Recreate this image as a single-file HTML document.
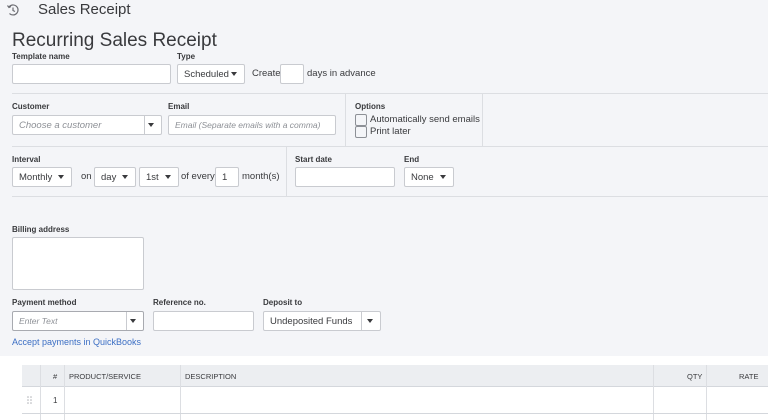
<!DOCTYPE html>
<html><head><meta charset="utf-8"><style>
*{box-sizing:border-box;margin:0;padding:0}
body{width:768px;height:420px;overflow:hidden;background:#f4f5f8;font-family:"Liberation Sans",sans-serif;color:#393a3d;position:relative}
.a{position:absolute}
.lbl{position:absolute;font-size:8px;font-weight:bold;color:#393a3d}
.in{position:absolute;background:#fff;border:1px solid #c9cbd0;border-radius:2px;font-size:9.5px;color:#393a3d;padding-left:6px;display:flex;align-items:center}
.ph{color:#8d9096;font-style:italic}
.car{position:absolute;right:7px;top:50%;margin-top:-2px;width:0;height:0;border-left:3px solid transparent;border-right:3px solid transparent;border-top:4px solid #393a3d}
.t{position:absolute;font-size:9.5px;color:#393a3d}
.hl{position:absolute;height:1px;background:#dcdee2}
.vl{position:absolute;width:1px;background:#dcdee2}
.cb{position:absolute;width:12px;height:12px;border:1px solid #8d9096;border-radius:2px;background:#f4f5f8}
</style></head><body>
<svg class="a" style="left:6px;top:3px" width="14" height="14" viewBox="0 0 14 14" fill="none" stroke="#6b6c72" stroke-width="1.2"><path d="M3 4 A5 5 0 1 1 3.5 10.5"/><path d="M1.5 2.5 L3 4.5 L5 3.5"/><path d="M7 4.5 V7.5 L9 8.5"/></svg>
<div class="a" style="left:38px;top:1px;font-size:15px;color:#393a3d">Sales Receipt</div>
<div class="a" style="left:12px;top:30px;font-size:19px;color:#393a3d">Recurring Sales Receipt</div>

<div class="lbl" style="left:12px;top:52px">Template name</div>
<div class="in" style="left:12px;top:64px;width:159px;height:20px"></div>
<div class="lbl" style="left:177px;top:52px">Type</div>
<div class="in" style="left:177px;top:64px;width:68px;height:20px">Scheduled<span class="car"></span></div>
<div class="t" style="left:252px;top:68px">Create</div>
<div class="in" style="left:280px;top:64px;width:24px;height:20px"></div>
<div class="t" style="left:307px;top:68px">days in advance</div>

<div class="hl" style="left:12px;top:93px;width:756px"></div>
<div class="vl" style="left:345px;top:93px;height:53px"></div>
<div class="vl" style="left:482px;top:93px;height:53px"></div>
<div class="lbl" style="left:12px;top:102px">Customer</div>
<div class="in" style="left:12px;top:115px;width:150px;height:20px"><span class="ph">Choose a customer</span><span class="car"></span><span class="a" style="left:131px;top:0;bottom:0;width:1px;background:#c9cbd0"></span></div>
<div class="lbl" style="left:168px;top:102px">Email</div>
<div class="in" style="left:168px;top:115px;width:168px;height:20px"><span class="ph" style="font-size:8.5px">Email (Separate emails with a comma)</span></div>
<div class="lbl" style="left:355px;top:102px">Options</div>
<div class="cb" style="left:355px;top:114px"></div>
<div class="t" style="left:370px;top:114px">Automatically send emails</div>
<div class="cb" style="left:355px;top:126px"></div>
<div class="t" style="left:370px;top:126px">Print later</div>

<div class="hl" style="left:12px;top:146px;width:756px"></div>
<div class="vl" style="left:286px;top:146px;height:50px"></div>
<div class="lbl" style="left:12px;top:155px">Interval</div>
<div class="in" style="left:12px;top:167px;width:60px;height:20px">Monthly<span class="car"></span></div>
<div class="t" style="left:81px;top:171px">on</div>
<div class="in" style="left:94px;top:167px;width:42px;height:20px">day<span class="car"></span></div>
<div class="in" style="left:139px;top:167px;width:40px;height:20px">1st<span class="car"></span></div>
<div class="t" style="left:181px;top:171px">of every</div>
<div class="in" style="left:215px;top:167px;width:24px;height:20px">1</div>
<div class="t" style="left:242px;top:171px">month(s)</div>
<div class="lbl" style="left:295px;top:155px">Start date</div>
<div class="in" style="left:295px;top:167px;width:100px;height:20px"></div>
<div class="lbl" style="left:404px;top:155px">End</div>
<div class="in" style="left:404px;top:167px;width:50px;height:20px">None<span class="car"></span></div>

<div class="hl" style="left:12px;top:196px;width:756px"></div>
<div class="lbl" style="left:12px;top:225px">Billing address</div>
<div class="in" style="left:12px;top:237px;width:132px;height:53px"></div>

<div class="lbl" style="left:12px;top:298px">Payment method</div>
<div class="in" style="left:12px;top:311px;width:132px;height:20px;border-color:#a8aab0"><span class="ph" style="font-size:8.5px">Enter Text</span><span class="car"></span><span class="a" style="left:113px;top:0;bottom:0;width:1px;background:#c9cbd0"></span></div>
<div class="lbl" style="left:153px;top:298px">Reference no.</div>
<div class="in" style="left:153px;top:311px;width:101px;height:20px"></div>
<div class="lbl" style="left:263px;top:298px">Deposit to</div>
<div class="in" style="left:263px;top:311px;width:118px;height:20px">Undeposited Funds<span class="car"></span><span class="a" style="left:97px;top:0;bottom:0;width:1px;background:#c9cbd0"></span></div>
<div class="a" style="left:12px;top:337px;font-size:9px;color:#3c6fc4">Accept payments in QuickBooks</div>

<div class="a" style="left:0;top:356px;width:768px;height:64px;background:#fff"></div>
<div class="a" style="left:22px;top:365px;width:746px;height:22px;background:#eceef1;border-bottom:1px solid #d4d7dc"></div>
<div class="vl" style="left:40px;top:365px;height:55px"></div>
<div class="vl" style="left:64px;top:365px;height:55px"></div>
<div class="vl" style="left:180px;top:365px;height:55px"></div>
<div class="vl" style="left:653px;top:365px;height:55px"></div>
<div class="vl" style="left:706px;top:365px;height:55px"></div>
<div class="t" style="left:53px;top:372px;font-size:7.5px">#</div>
<div class="t" style="left:69px;top:372px;font-size:7.5px">PRODUCT/SERVICE</div>
<div class="t" style="left:185px;top:372px;font-size:7.5px">DESCRIPTION</div>
<div class="t" style="left:687px;top:372px;font-size:7.5px">QTY</div>
<div class="t" style="left:739px;top:372px;font-size:7.5px">RATE</div>
<svg class="a" style="left:27px;top:396px" width="7" height="9" fill="#b0b2b7"><circle cx="1" cy="1" r=".8"/><circle cx="4" cy="1" r=".8"/><circle cx="1" cy="4" r=".8"/><circle cx="4" cy="4" r=".8"/><circle cx="1" cy="7" r=".8"/><circle cx="4" cy="7" r=".8"/></svg>
<div class="t" style="left:53px;top:396px;font-size:8px">1</div>
<div class="hl" style="left:22px;top:413px;width:746px;background:#d4d7dc"></div>
</body></html>
